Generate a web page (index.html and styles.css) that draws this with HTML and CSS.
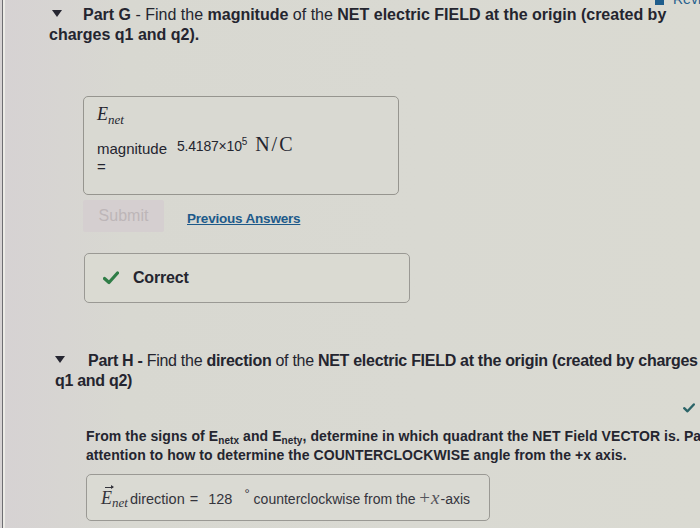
FILE: index.html
```html
<!DOCTYPE html>
<html lang="en">
<head>
<meta charset="utf-8">
<title>Part G / Part H</title>
<link rel="stylesheet" href="styles.css">
</head>
<body>
<div class="page">
  <div class="topbar">
    <span class="rev-icon"></span>
    <a class="rev-link" href="#">Review</a>
  </div>

  <section class="part part-g">
    <h2 class="part-title"><span class="caret"></span><b>Part G</b> - Find the <b>magnitude</b> of the <b>NET electric FIELD at the origin (created by</b><br><b>charges q1 and q2).</b></h2>

    <div class="answer-box">
      <div class="var-name"><i>E</i><sub>net</sub></div>
      <div class="mag-row">
        <div class="mag-label">magnitude<br>=</div>
        <div class="mag-value">5.4187×10<sup>5</sup><span class="unit">N/C</span></div>
      </div>
    </div>

    <div class="actions">
      <button class="submit" type="button">Submit</button>
      <a class="prev-link" href="#">Previous Answers</a>
    </div>

    <div class="feedback">
      <svg class="check-green" width="16" height="14" viewBox="0 0 16 14"><path d="M1.5 7.5 L6 11.5 L14.5 2" fill="none" stroke="#2f7d47" stroke-width="3.2" stroke-linecap="round" stroke-linejoin="round"/></svg>
      <span class="feedback-text">Correct</span>
    </div>
  </section>

  <section class="part part-h">
    <h2 class="part-title"><span class="caret"></span><b>Part H -</b> Find the <b>direction</b> of the <b>NET electric FIELD at the origin (created by charges</b><br><b>q1 and q2)</b></h2>

    <div class="status-row">
      <svg width="12" height="10" viewBox="0 0 12 10"><path d="M1.2 5.2 L4.5 8.3 L10.8 1.5" fill="none" stroke="#2b6468" stroke-width="2.4" stroke-linecap="round" stroke-linejoin="round"/></svg>
    </div>

    <p class="prompt">From the signs of E<sub>netx</sub> and E<sub>nety</sub>, determine in which quadrant the NET Field VECTOR is. Pay<br>attention to how to determine the COUNTERCLOCKWISE angle from the +x axis.</p>

    <div class="direction-box">
      <span class="vec"><i>E</i><sub>net</sub></span><span class="dir-label">direction =</span><span class="dir-value">128</span><span class="deg">°</span><span class="dir-tail">counterclockwise from the <span class="math">+<i>x</i></span>-axis</span>
    </div>
  </section>
</div>
</body>
</html>
```

FILE: styles.css
```css
html, body {
  margin: 0;
  padding: 0;
}

body {
  width: 700px;
  height: 528px;
  overflow: hidden;
  background: linear-gradient(90deg, #d6d2d3 0%, #d8d8d1 18%, #d9d9d2 60%, #dadad2 100%);
  font-family: "Liberation Sans", Arial, sans-serif;
  color: #24252f;
}

.page {
  margin-left: 2px;
  border-left: 1px solid #6e6e72;
  box-shadow: inset 2px 0 0 #ecebe6;
  height: 528px;
  width: 760px;
}

/* top cut-off review link */
.topbar {
  display: flex;
  align-items: flex-end;
  gap: 9px;
  height: 5px;
  overflow: hidden;
  padding-left: 652px;
}

.rev-icon {
  display: block;
  width: 9px;
  height: 9px;
  background: #1e5d8c;
  flex: none;
}

.rev-link {
  color: #1e5d8c;
  font-size: 14px;
  line-height: 14px;
  text-decoration: underline;
  margin-bottom: -1px;
}

.part-title {
  margin: 0;
  font-size: 16px;
  line-height: 20px;
  font-weight: normal;
  white-space: nowrap;
  letter-spacing: 0;
}

.part-title b {
  font-weight: bold;
}

.caret {
  display: inline-block;
  width: 0;
  height: 0;
  border-left: 5px solid transparent;
  border-right: 5px solid transparent;
  border-top: 7px solid #262631;
  margin-right: 21px;
  vertical-align: 3px;
}

/* Part G */
.part-g {
  padding-left: 46px;
}

.part-g .caret {
  margin-left: 3px;
}

.answer-box {
  margin: 51px 0 0 34px;
  width: 301px;
  height: 97px;
  border: 1px solid #96958f;
  border-radius: 5px;
  padding: 0 0 0 13px;
  background: #d9d9d2;
}

.var-name {
  font-family: "Liberation Serif", "Times New Roman", serif;
  font-size: 18px;
  line-height: 20px;
  margin-top: 7px;
}

.var-name sub {
  font-size: 13px;
  font-style: italic;
  vertical-align: -4px;
  line-height: 0;
}

.mag-row {
  display: flex;
  align-items: flex-start;
  margin-top: 9px;
}

.mag-label {
  width: 80px;
  font-size: 15px;
  line-height: 18px;
  padding-top: 7px;
}

.mag-value {
  font-size: 14px;
  line-height: 18px;
  letter-spacing: -0.2px;
  padding-top: 2px;
}

.mag-value sup {
  font-size: 10px;
  vertical-align: 6px;
  line-height: 0;
}

.unit {
  font-family: "Liberation Serif", "Times New Roman", serif;
  font-size: 20px;
  letter-spacing: 2px;
  margin-left: 8px;
}

.actions {
  display: flex;
  align-items: center;
  gap: 23px;
  margin: 5px 0 0 34px;
}

.submit {
  width: 81px;
  height: 32px;
  border: none;
  border-radius: 2px;
  background: #d5cfd0;
  color: #bdb6b8;
  font-family: "Liberation Sans", Arial, sans-serif;
  font-size: 16px;
  padding: 0;
}

.prev-link {
  color: #1d5a8a;
  font-weight: bold;
  font-size: 13.5px;
  letter-spacing: -0.2px;
  text-decoration: underline;
  margin-top: 4px;
}

.feedback {
  display: flex;
  align-items: center;
  margin: 21px 0 0 35px;
  width: 306px;
  height: 48px;
  border: 1px solid #9a9994;
  border-radius: 5px;
  background: #dadad2;
  padding-left: 18px;
}

.feedback-text {
  font-weight: bold;
  font-size: 16px;
  letter-spacing: -0.2px;
  margin-left: 14px;
}

/* Part H */
.part-h {
  padding-left: 52px;
  margin-top: 48px;
}

.part-h .caret {
  margin-left: 0;
  margin-right: 23px;
}

.part-h .part-title {
  letter-spacing: -0.29px;
}

.status-row {
  display: flex;
  justify-content: flex-end;
  width: 640px;
  margin-top: 12px;
  height: 10px;
}

.prompt {
  margin: 14px 0 0 31px;
  font-size: 14px;
  line-height: 19px;
  font-weight: bold;
  white-space: nowrap;
  letter-spacing: 0.08px;
}

.prompt sub {
  font-size: 10px;
  vertical-align: -3px;
  line-height: 0;
}

.direction-box {
  display: flex;
  align-items: baseline;
  margin: 9px 0 0 31px;
  width: 388px;
  height: 45px;
  border: 1px solid #9a9994;
  border-radius: 5px;
  background: #dadad3;
  padding-left: 14px;
  line-height: 45px;
  font-size: 14px;
  color: #34343c;
}

.vec {
  position: relative;
  font-family: "Liberation Serif", "Times New Roman", serif;
  font-size: 18px;
}

.vec::before {
  content: "";
  position: absolute;
  left: 4px;
  top: 11px;
  width: 8px;
  border-top: 1px solid #34343c;
}

.vec::after {
  content: "";
  position: absolute;
  left: 10px;
  top: 9px;
  border-left: 3px solid #34343c;
  border-top: 2.5px solid transparent;
  border-bottom: 2.5px solid transparent;
}

.vec sub {
  font-size: 13px;
  font-style: italic;
  line-height: 0;
  vertical-align: -3px;
}

.dir-label {
  margin-left: 2px;
  word-spacing: 1px;
  font-size: 14.5px;
}

.dir-value {
  margin-left: 10px;
  font-size: 14.5px;
}

.deg {
  font-size: 13px;
  margin-left: 12px;
  position: relative;
  top: -6px;
}

.dir-tail {
  margin-left: 4px;
  font-size: 14px;
}

.math {
  font-family: "Liberation Serif", "Times New Roman", serif;
  font-size: 19px;
  color: #55555c;
  margin-right: 1px;
}

.math i {
  margin-left: 1px;
}
```
